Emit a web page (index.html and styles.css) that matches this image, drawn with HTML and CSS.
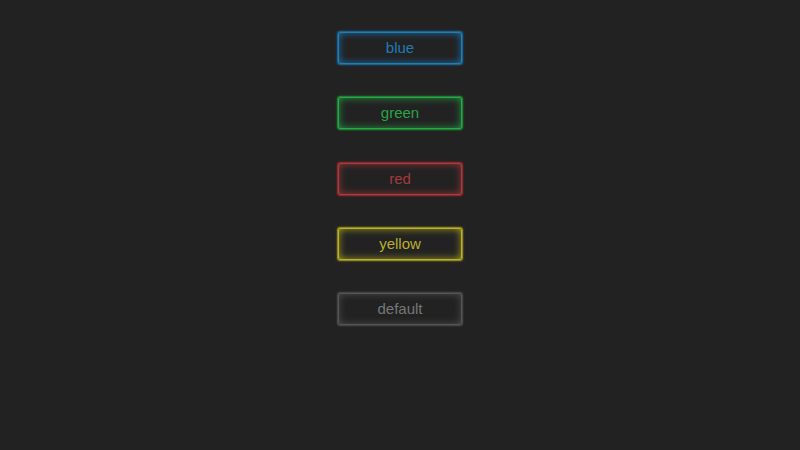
FILE: index.html
```html
<!DOCTYPE html>
<html>
<head>
<meta charset="utf-8">
<link rel="stylesheet" href="styles.css">
</head>
<body>
<main class="stack">
  <button class="glow glow-blue">blue</button>
  <button class="glow glow-green">green</button>
  <button class="glow glow-red">red</button>
  <button class="glow glow-yellow">yellow</button>
  <button class="glow glow-default">default</button>
</main>
</body>
</html>
```

FILE: styles.css
```css
html, body {
  margin: 0;
  padding: 0;
  background: #222222;
  height: 100%;
}

.stack {
  display: flex;
  flex-direction: column;
  align-items: center;
  gap: 31.25px;
  padding-top: 31px;
}

.glow {
  --c: #888;
  --edge: #666;
  box-sizing: border-box;
  width: 126px;
  height: 34px;
  margin: 0;
  padding: 0;
  background: #222222;
  border: 1px solid var(--edge);
  border-radius: 3px;
  color: var(--c);
  font-family: "Liberation Sans", Arial, sans-serif;
  font-size: 15px;
  line-height: 32px;
  text-align: center;
  cursor: pointer;
  box-shadow: inset 0 0 0 1px var(--c), inset 0 0 9px var(--c), 0 0 2px var(--edge);
  outline: none;
}

.glow-blue { --c: #1f7dba; --edge: #17608f; color: #1f7bb5; }
.glow-green { --c: #27a945; --edge: #1d8035; color: #2aa447; }
.glow-red { --c: #ad3a3c; --edge: #85292b; color: #a63a3b; }
.glow-yellow { --c: #bcb22a; --edge: #8f8720; color: #b9ae2e; }
.glow-default { --c: #555555; --edge: #444444; color: #777777; }
```
